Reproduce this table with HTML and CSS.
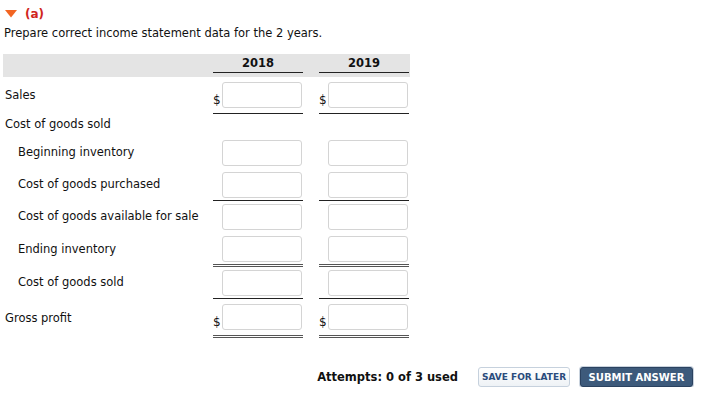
FILE: index.html
```html
<!DOCTYPE html>
<html>
<head>
<meta charset="utf-8">
<link rel="stylesheet" href="styles.css">
</head>
<body>
<div class="page">
  <div class="part-head">
    <svg class="tri" width="12" height="8" viewBox="0 0 12 8"><polygon points="0,0 12,0 6,7.5" fill="#f26522"/></svg>
    <span class="part">(a)</span>
  </div>
  <p class="instr">Prepare correct income statement data for the 2 years.</p>

  <div class="sheet">
    <div class="row head">
      <div class="lbl"></div>
      <div class="year">2018</div>
      <div class="year">2019</div>
    </div>

    <div class="row big line">
      <div class="lbl">Sales</div>
      <div class="val"><span class="cur">$</span><input class="inp" type="text"></div>
      <div class="val"><span class="cur">$</span><input class="inp" type="text"></div>
    </div>

    <div class="row sub">
      <div class="lbl">Cost of goods sold</div>
      <div class="empty"></div>
      <div class="empty"></div>
    </div>

    <div class="row">
      <div class="lbl ind">Beginning inventory</div>
      <div class="val"><input class="inp" type="text"></div>
      <div class="val"><input class="inp" type="text"></div>
    </div>

    <div class="row line">
      <div class="lbl ind">Cost of goods purchased</div>
      <div class="val"><input class="inp" type="text"></div>
      <div class="val"><input class="inp" type="text"></div>
    </div>

    <div class="row">
      <div class="lbl ind">Cost of goods available for sale</div>
      <div class="val"><input class="inp" type="text"></div>
      <div class="val"><input class="inp" type="text"></div>
    </div>

    <div class="row dbl">
      <div class="lbl ind">Ending inventory</div>
      <div class="val"><input class="inp" type="text"></div>
      <div class="val"><input class="inp" type="text"></div>
    </div>

    <div class="row line">
      <div class="lbl ind">Cost of goods sold</div>
      <div class="val"><input class="inp" type="text"></div>
      <div class="val"><input class="inp" type="text"></div>
    </div>

    <div class="row big dbl">
      <div class="lbl">Gross profit</div>
      <div class="val"><span class="cur">$</span><input class="inp" type="text"></div>
      <div class="val"><span class="cur">$</span><input class="inp" type="text"></div>
    </div>
  </div>

  <div class="actions">
    <span class="attempts">Attempts: 0 of 3 used</span>
    <button class="btn save">SAVE FOR LATER</button>
    <button class="btn submit">SUBMIT ANSWER</button>
  </div>
</div>
</body>
</html>
```

FILE: styles.css
```css
html, body {
  margin: 0;
  padding: 0;
  background: #ffffff;
}

.page {
  font-family: "DejaVu Sans", Verdana, sans-serif;
  font-size: 11.5px;
  color: #111;
  padding: 6px 0 0 3px;
}

.part-head {
  display: flex;
  align-items: center;
  gap: 8px;
  padding-left: 2px;
  height: 16px;
}

.tri {
  display: block;
}

.part {
  color: #d0261d;
  font-weight: bold;
  font-size: 12px;
}

.instr {
  margin: 4px 0 0 1px;
  line-height: 14px;
}

.sheet {
  margin-top: 14px;
  width: 407px;
}

.row {
  display: grid;
  grid-template-columns: 194px 90px 90px;
  column-gap: 16px;
}

.row.head {
  background: #e4e4e4;
  padding-bottom: 4px;
  padding-right: 1px;
}

.year {
  text-align: center;
  font-weight: bold;
  line-height: 17px;
  padding-top: 1px;
  border-bottom: 1px solid #222;
}

.lbl {
  align-self: center;
  padding-left: 2px;
  padding-bottom: 2px;
  white-space: nowrap;
}

.lbl.ind {
  padding-left: 15px;
}

.val {
  display: flex;
  justify-content: flex-end;
  align-items: flex-end;
  padding: 3px 1px 2px 0;
  border-bottom: 1px solid transparent;
}

.row.big .val {
  padding-top: 5px;
  padding-bottom: 5px;
}

.row.line .val {
  border-bottom: 1px solid #222;
}

.row.dbl .val {
  border-bottom: 3px double #555;
}

.row.sub {
  height: 23px;
}

.row.sub .lbl {
  padding-bottom: 4px;
}

.cur {
  font-size: 12px;
  line-height: 14px;
  margin-right: 1px;
  margin-bottom: 1px;
  width: 8px;
}

.inp {
  box-sizing: border-box;
  width: 80px;
  height: 26px;
  margin: 0;
  border: 1px solid #d4d4d4;
  border-radius: 3px;
  background: #fff;
  padding: 0 4px;
  font: inherit;
}

.actions {
  display: flex;
  justify-content: flex-end;
  align-items: center;
  margin-top: 29px;
  padding-right: 14px;
  width: 690px;
}

.attempts {
  font-weight: bold;
  font-size: 11.5px;
  margin-right: 20px;
}

.btn {
  box-sizing: border-box;
  height: 20px;
  font-family: "DejaVu Sans", Verdana, sans-serif;
  font-weight: bold;
  font-size: 9px;
  border-radius: 3px;
  cursor: pointer;
  padding: 0;
}

.btn.save {
  width: 92px;
  background: linear-gradient(#ffffff, #eef2f6);
  border: 1px solid #c6d1dd;
  color: #2a4b7c;
  margin-right: 10px;
}

.btn.submit {
  width: 113px;
  background: #3d5a7b;
  border: 1px solid #2b4260;
  box-shadow: 0 0 0 1px #c9d3de;
  color: #ffffff;
  font-size: 10px;
}
```
